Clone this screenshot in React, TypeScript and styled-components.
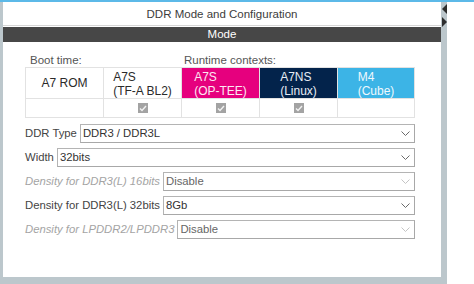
import styled, { createGlobalStyle } from "styled-components";

const GlobalStyle = createGlobalStyle`
  html, body {
    margin: 0;
    padding: 0;
    background: #ffffff;
  }
  body {
    font-family: "Liberation Sans", Arial, sans-serif;
    font-size: 11.3px;
    color: #3a3a3a;
  }
`;

const Page = styled.div`
  width: 474px;
  height: 284px;
  display: flex;
  flex-direction: column;
  overflow: hidden;
`;

const TopLine = styled.div`
  height: 2px;
  flex-shrink: 0;
  background-color: #5cb9e8;
`;

const Frame = styled.div`
  flex: 1;
  width: 447px;
  display: flex;
  border-left: 3px solid #bcc7cc;
  box-sizing: border-box;
`;

const BottomBar = styled.div`
  height: 7px;
  width: 447px;
  flex-shrink: 0;
  background-color: #bcc7cc;
`;

const Panel = styled.div`
  flex: 1;
  display: flex;
  flex-direction: column;
  background-color: #ffffff;
`;

const Splitter = styled.div`
  width: 7px;
  background-color: #bcc7cc;
  display: flex;
  flex-direction: column;
  align-items: center;
  gap: 3px;
  padding-top: 2px;
`;

const Arrow = styled.div<{ $dir: "left" | "right" }>`
  width: 0;
  height: 0;
  border-top: 5px solid transparent;
  border-bottom: 5px solid transparent;
  ${(p) =>
    p.$dir === "left"
      ? "border-right: 5px solid #2e2e2e;"
      : "border-left: 5px solid #2e2e2e;"}
`;

const Title = styled.div`
  height: 23px;
  line-height: 24px;
  text-align: center;
  font-size: 11.5px;
  color: #3c3c3c;
  border-bottom: 1px solid #d6d6d6;
`;

const ModeBar = styled.div`
  height: 15px;
  line-height: 15px;
  margin-top: 1px;
  text-align: center;
  font-size: 11.5px;
  color: #ffffff;
  background-color: #474747;
`;

const Content = styled.div`
  padding: 11px 26px 0 22px;
  display: flex;
  flex-direction: column;
`;

const GroupLabels = styled.div`
  display: grid;
  grid-template-columns: 156px 233px;
  height: 14px;
  line-height: 14px;
  font-size: 11.5px;
  color: #555555;
`;

const GroupLabel = styled.span<{ $pad: number }>`
  padding-left: ${(p) => p.$pad}px;
`;

const ContextTable = styled.div`
  display: grid;
  grid-template-columns: 78px 78px 78px 78px 77px;
  grid-template-rows: 31px 19px;
  border-top: 1px solid #e2e2e2;
  border-left: 1px solid #e2e2e2;
  margin-bottom: 5px;
`;

const HeadCell = styled.div<{ $bg: string; $fg: string }>`
  display: flex;
  align-items: center;
  justify-content: center;
  background-color: ${(p) => p.$bg};
  color: ${(p) => p.$fg};
  border-right: 1px solid #e2e2e2;
  border-bottom: 1px solid #e2e2e2;
  overflow: hidden;
  font-size: 12px;
`;

const HeadText = styled.div<{ $twoLine?: boolean }>`
  text-align: left;
  line-height: 14px;
  ${(p) => (p.$twoLine ? "margin-top: 2px;" : "")}
`;

const CheckCell = styled.div`
  display: flex;
  align-items: center;
  justify-content: center;
  border-right: 1px solid #e2e2e2;
  border-bottom: 1px solid #e2e2e2;
`;

const CheckBox = styled.div`
  width: 10px;
  height: 10px;
  background-color: #a3a3a3;
  display: flex;
  align-items: center;
  justify-content: center;
`;

const FieldRow = styled.div`
  display: flex;
  align-items: center;
  height: 20px;
  margin-bottom: 4px;
`;

const FieldLabel = styled.span<{ $disabled?: boolean }>`
  color: ${(p) => (p.$disabled ? "#a4a4a4" : "#444444")};
  font-style: ${(p) => (p.$disabled ? "italic" : "normal")};
  white-space: nowrap;
  margin-right: 3px;
`;

const Select = styled.div<{ $disabled?: boolean }>`
  flex: 1;
  height: 19px;
  box-sizing: border-box;
  display: flex;
  align-items: center;
  justify-content: space-between;
  padding: 0 4px 0 2px;
  border: 1px solid #b4b4b4;
  border-right-color: #a8a8a8;
  border-bottom-color: #a8a8a8;
  background-color: #ffffff;
  color: ${(p) => (p.$disabled ? "#666666" : "#333333")};
  svg polyline {
    stroke: ${(p) => (p.$disabled ? "#c4c4c4" : "#6a6a6a")};
  }
`;

const Check = () => (
  <CheckBox>
    <svg width="8" height="7" viewBox="0 0 8 7">
      <polyline points="1,3.5 3,5.5 7,1" fill="none" stroke="#f2f2f2" strokeWidth="1.4" />
    </svg>
  </CheckBox>
);

const Chevron = () => (
  <svg width="9" height="5" viewBox="0 0 9 5">
    <polyline points="0.5,0.5 4.5,4.5 8.5,0.5" fill="none" strokeWidth="1" />
  </svg>
);

const contexts = [
  { lines: ["A7 ROM"], bg: "#ffffff", fg: "#2a2a2a", checked: false },
  { lines: ["A7S", "(TF-A BL2)"], bg: "#ffffff", fg: "#2a2a2a", checked: true },
  { lines: ["A7S", "(OP-TEE)"], bg: "#e6007e", fg: "#fde6f2", checked: true },
  { lines: ["A7NS", "(Linux)"], bg: "#03234b", fg: "#e8edf4", checked: true },
  { lines: ["M4", "(Cube)"], bg: "#3cb4e6", fg: "#eef8fd", checked: false },
];

const fields = [
  { label: "DDR Type", value: "DDR3 / DDR3L", disabled: false },
  { label: "Width", value: "32bits", disabled: false },
  { label: "Density for DDR3(L) 16bits", value: "Disable", disabled: true },
  { label: "Density for DDR3(L) 32bits", value: "8Gb", disabled: false },
  { label: "Density for LPDDR2/LPDDR3", value: "Disable", disabled: true },
];

const App = () => {
  return (
    <>
      <GlobalStyle />
      <Page>
        <TopLine />
        <Frame>
          <Panel>
            <Title>DDR Mode and Configuration</Title>
            <ModeBar>Mode</ModeBar>
            <Content>
              <GroupLabels>
                <GroupLabel $pad={5}>Boot time:</GroupLabel>
                <GroupLabel $pad={3}>Runtime contexts:</GroupLabel>
              </GroupLabels>
              <ContextTable>
                {contexts.map((c) => (
                  <HeadCell key={c.lines.join()} $bg={c.bg} $fg={c.fg}>
                    <HeadText $twoLine={c.lines.length > 1}>
                      {c.lines.map((l) => (
                        <div key={l}>{l}</div>
                      ))}
                    </HeadText>
                  </HeadCell>
                ))}
                {contexts.map((c) => (
                  <CheckCell key={"chk" + c.lines.join()}>
                    {c.checked && <Check />}
                  </CheckCell>
                ))}
              </ContextTable>
              {fields.map((f) => (
                <FieldRow key={f.label}>
                  <FieldLabel $disabled={f.disabled}>{f.label}</FieldLabel>
                  <Select $disabled={f.disabled}>
                    <span>{f.value}</span>
                    <Chevron />
                  </Select>
                </FieldRow>
              ))}
            </Content>
          </Panel>
          <Splitter>
            <Arrow $dir="left" />
            <Arrow $dir="right" />
          </Splitter>
        </Frame>
        <BottomBar />
      </Page>
    </>
  );
};

export default App;
